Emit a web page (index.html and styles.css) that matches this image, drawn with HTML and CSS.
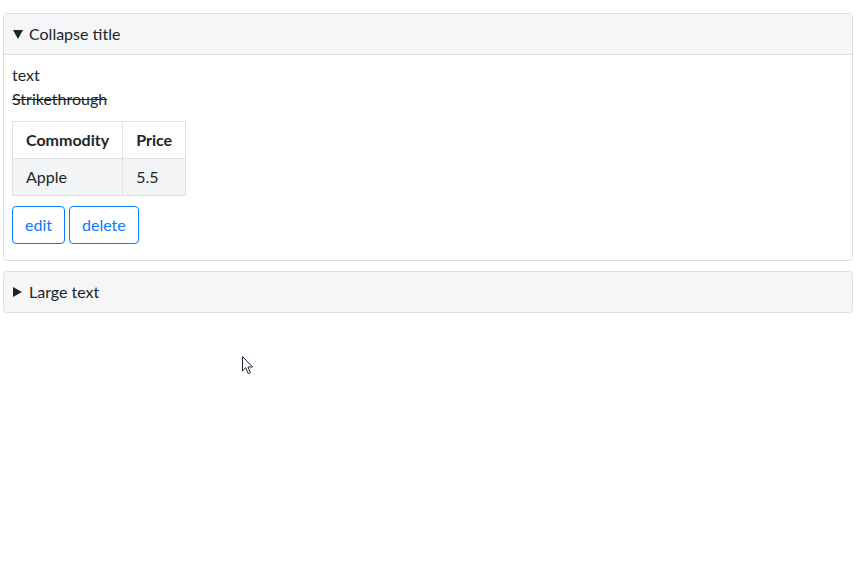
FILE: index.html
```html
<!DOCTYPE html>
<html>
<head>
<meta charset="utf-8">
<link rel="stylesheet" href="styles.css">
</head>
<body>
<details class="panel" open>
  <summary class="panel-head"><span class="caret down"></span>Collapse title</summary>
  <div class="panel-body">
    <div class="line">text</div>
    <div class="line"><s>Strikethrough</s></div>
    <table class="tbl">
      <thead><tr><th>Commodity</th><th>Price</th></tr></thead>
      <tbody><tr><td>Apple</td><td>5.5</td></tr></tbody>
    </table>
    <div class="actions">
      <button class="btn">edit</button>
      <button class="btn">delete</button>
    </div>
  </div>
</details>
<details class="panel closed">
  <summary class="panel-head"><span class="caret right"></span>Large text</summary>
</details>
<div class="cursor"><svg width="14" height="21" viewBox="0 0 14 21"><path d="M1.5 1.5 L1.5 16 L4.8 12.8 L7.2 18.6 L9.4 17.7 L7 12 L11.6 12 Z" fill="#ffffff" stroke="#222233" stroke-width="1" stroke-linejoin="miter"/></svg></div>
</body>
</html>
```
FILE: styles.css
```css
html, body { background: #fff; }
body {
  margin: 13px 8px 0 3px;
  font-family: "Segoe UI", Lato, "Liberation Sans", sans-serif;
  font-size: 16px;
  line-height: 24px;
  color: #212529;
  position: relative;
  min-height: 400px;
}
.panel {
  border: 1px solid #dcdedf;
  border-radius: 4px;
  margin-bottom: 10px;
  overflow: hidden;
}
.panel-head {
  list-style: none;
  display: flex;
  align-items: center;
  height: 40px;
  padding: 0 8px;
  background: #f5f6f7;
  cursor: pointer;
}
.panel-head::-webkit-details-marker { display: none; }
.panel[open] .panel-head { border-bottom: 1px solid #dcdedf; }
.caret {
  display: inline-block;
  width: 0;
  height: 0;
}
.caret.down {
  border-left: 5px solid transparent;
  border-right: 5px solid transparent;
  border-top: 9px solid #212529;
  margin: 1px 6px 0 1px;
}
.caret.right {
  border-top: 5px solid transparent;
  border-bottom: 5px solid transparent;
  border-left: 9px solid #212529;
  margin: 0 7px 0 1px;
}
.panel-body {
  padding: 8px 8px 16px 8px;
}
.tbl {
  border-collapse: collapse;
  margin-top: 10px;
}
.tbl th, .tbl td {
  border: 1px solid #dee2e6;
  padding: 6px 13px;
  text-align: left;
  height: 24px;
}
.tbl th { font-weight: 700; background: #fff; }
.tbl td { background: #f4f5f6; }
.actions {
  display: flex;
  gap: 4px;
  margin-top: 10px;
}
.btn {
  font: inherit;
  color: #0a7bff;
  background: #fff;
  border: 1px solid #0a7bff;
  border-radius: 4px;
  padding: 6px 12px;
  line-height: 24px;
}
.cursor {
  position: absolute;
  left: 238px;
  top: 342px;
  width: 14px;
  height: 21px;
  z-index: 10;
}
.cursor svg { display: block; }
```
